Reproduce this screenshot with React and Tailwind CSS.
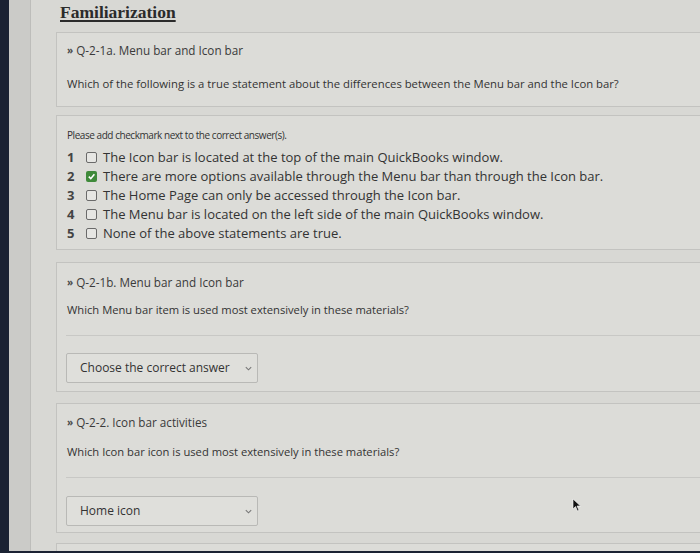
import React from "react";

const font = { fontFamily: '"Open Sans", "Noto Sans", sans-serif' };

function Header({ children }) {
  return (
    <div className="text-[11.7px] leading-[16px] text-[#3a3a3a] flex items-center">
      <span className="text-[10px] mr-[3px] text-[#4a4a4a] font-bold">»</span>
      {children}
    </div>
  );
}

function Box({ checked }) {
  if (checked) {
    return (
      <span className="w-[11px] h-[11px] rounded-[2px] bg-[#3f8a3a] flex items-center justify-center">
        <svg width="9" height="9" viewBox="0 0 10 10">
          <path d="M2 5.2 L4.2 7.4 L8.2 2.6" stroke="#fff" strokeWidth="1.8" fill="none" />
        </svg>
      </span>
    );
  }
  return <span className="w-[11px] h-[11px] rounded-[2px] border border-[#6a6a6a] bg-[#e6e6e3]" />;
}

function Select({ label }) {
  return (
    <div className="w-[192px] h-[30px] ml-[9px] border border-[#b9b9b6] rounded-[2px] bg-[#dfdfdb] flex items-center justify-between pl-[13px] pr-[4px] text-[12px] text-[#333]">
      <span>{label}</span>
      <svg width="9" height="9" viewBox="0 0 10 10">
        <path d="M2 3.5 L5 6.5 L8 3.5" stroke="#777" strokeWidth="1.2" fill="none" />
      </svg>
    </div>
  );
}

const options = [
  ["1", false, "The Icon bar is located at the top of the main QuickBooks window."],
  ["2", true, "There are more options available through the Menu bar than through the Icon bar."],
  ["3", false, "The Home Page can only be accessed through the Icon bar."],
  ["4", false, "The Menu bar is located on the left side of the main QuickBooks window."],
  ["5", false, "None of the above statements are true."],
];

export default function App() {
  return (
    <div className="w-[700px] h-[553px] flex flex-col overflow-hidden bg-[#1b2233]" style={font}>
      <div className="flex flex-1 min-h-0">
        <div className="w-[9px] bg-[#1b2233]" />
        <div className="w-[22px] bg-[#cbcbc8] border-r border-[#bdbdba]" />
        <div className="flex-1 bg-[#d8d8d4] pl-[25px] flex flex-col">
          <div className="h-[32px] pl-[4px] pt-[0px]">
            <span
              className="text-[17.5px] leading-[20px] font-bold underline decoration-[1.5px] underline-offset-[2px] text-[#2b2b2b]"
              style={{ fontFamily: '"Liberation Serif", "DejaVu Serif", serif' }}
            >
              Familiarization
            </span>
          </div>

          <div className="h-[75px] border border-r-0 border-[#c3c3c0] bg-[#dcdcd8] pl-[10px] pt-[9px] flex flex-col">
            <Header>Q-2-1a. Menu bar and Icon bar</Header>
            <div className="mt-[18px] text-[11.3px] leading-[16px] text-[#333]">
              Which of the following is a true statement about the differences between the Menu bar and the Icon bar?
            </div>
          </div>

          <div className="mt-[8px] h-[135px] border border-r-0 border-[#c3c3c0] bg-[#dcdcd8] pl-[10px] pt-[12px] flex flex-col">
            <div className="text-[10px] leading-[14px] text-[#333] tracking-[-0.45px]">
              Please add checkmark next to the correct answer(s).
            </div>
            <div className="mt-[6px] flex flex-col">
              {options.map(([n, c, t]) => (
                <div key={n} className="h-[19px] flex items-center text-[13px] text-[#333]">
                  <span className="w-[19px] font-bold text-[#444]">{n}</span>
                  <Box checked={c} />
                  <span className="ml-[6px]">{t}</span>
                </div>
              ))}
            </div>
          </div>

          <div className="mt-[12px] h-[130px] border border-r-0 border-[#c3c3c0] bg-[#dcdcd8] pt-[11px] flex flex-col">
            <div className="pl-[10px]">
              <Header>Q-2-1b. Menu bar and Icon bar</Header>
            </div>
            <div className="pl-[10px] mt-[12px] text-[11.2px] leading-[16px] text-[#333]">
              Which Menu bar item is used most extensively in these materials?
            </div>
            <div className="ml-[9px] mt-[17px] border-t border-[#c8c8c5]" />
            <div className="mt-[17px]">
              <Select label="Choose the correct answer" />
            </div>
          </div>

          <div className="mt-[11px] h-[130px] border border-r-0 border-[#c3c3c0] bg-[#dcdcd8] pt-[10px] flex flex-col">
            <div className="pl-[10px]">
              <Header>Q-2-2. Icon bar activities</Header>
            </div>
            <div className="pl-[10px] mt-[14px] text-[11.2px] leading-[16px] text-[#333]">
              Which Icon bar icon is used most extensively in these materials?
            </div>
            <div className="ml-[9px] mt-[17px] border-t border-[#c8c8c5]" />
            <div className="mt-[18px] relative">
              <Select label="Home icon" />
              <svg className="absolute left-[515px] top-[2px]" width="10" height="14" viewBox="0 0 10 14">
                <path d="M1 1 L1 11 L3.5 8.5 L5.5 13 L7 12.3 L5 8 L8.5 8 Z" fill="#111" stroke="#fff" strokeWidth="0.6" />
              </svg>
            </div>
          </div>

          <div className="mt-[10px] flex-1 border border-r-0 border-b-0 border-[#c3c3c0] bg-[#dcdcd8]" />
        </div>
      </div>
      <div className="h-[2px] bg-[#1b2233]" />
    </div>
  );
}
